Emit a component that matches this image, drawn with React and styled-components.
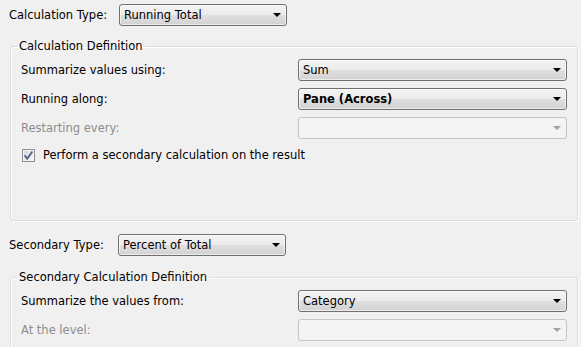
import React from "react";
import styled, { createGlobalStyle } from "styled-components";

const GlobalStyle = createGlobalStyle`
  html, body {
    margin: 0;
    padding: 0;
    background: #f0f0f0;
  }
  body {
    font-family: "DejaVu Sans", Tahoma, sans-serif;
    font-size: 11.5px;
    color: #000;
    width: 581px;
    height: 347px;
    overflow: hidden;
  }
`;

const Page = styled.div`
  display: flex;
  flex-direction: column;
  padding: 4px 3px 0 9px;
`;

const TypeRow = styled.div`
  display: flex;
  align-items: center;
  height: 22px;
  margin-top: ${(p) => p.$top || 0}px;
`;

const TypeLabel = styled.label`
  width: ${(p) => p.$width}px;
  flex: none;
`;

const Group = styled.fieldset`
  margin: 0;
  margin-top: ${(p) => p.$top || 0}px;
  margin-left: 1px;
  padding: 6px 10px ${(p) => p.$bottom || 0}px 10px;
  border: 1px solid #d5dfe5;
  border-radius: 3px;
  box-shadow: inset 1px 1px 0 #fff, 1px 1px 0 #fff;
  min-width: 0;
`;

const Legend = styled.legend`
  margin-left: -4px;
  padding: 0 2px;
  line-height: 14px;
`;

const Rows = styled.div`
  display: grid;
  grid-template-columns: 277px 1fr;
  grid-auto-rows: 22px;
  row-gap: 7px;
  align-items: center;
`;

const RowLabel = styled.label`
  color: ${(p) => (p.$disabled ? "#8d8d8d" : "#000")};
`;

const Combo = styled.div`
  box-sizing: border-box;
  height: 22px;
  width: ${(p) => (p.$width ? `${p.$width}px` : "100%")};
  display: flex;
  align-items: center;
  justify-content: space-between;
  padding: 0 5px 0 4px;
  border: 1px solid ${(p) => (p.$disabled ? "#c3c6c8" : "#707070")};
  border-radius: 3px;
  background: ${(p) =>
    p.$disabled
      ? "#f4f4f4"
      : "linear-gradient(#f3f3f3 0%, #ececec 48%, #dfdfdf 52%, #d2d2d2 100%)"};
  box-shadow: ${(p) => (p.$disabled ? "none" : "inset 0 0 0 1px rgba(255,255,255,0.6)")};
  font-weight: ${(p) => (p.$bold ? "bold" : "normal")};
  white-space: nowrap;
`;

const Arrow = styled.span`
  width: 0;
  height: 0;
  border-left: 4px solid transparent;
  border-right: 4px solid transparent;
  border-top: 4px solid ${(p) => (p.$disabled ? "#a2a2a2" : "#000")};
  flex: none;
`;

const CheckRow = styled.label`
  display: flex;
  align-items: center;
  gap: 8px;
  height: 16px;
  margin-top: 8px;
  padding-left: 1px;
`;

const Select = ({ value, bold, disabled, width }) => (
  <Combo $bold={bold} $disabled={disabled} $width={width}>
    <span>{value}</span>
    <Arrow $disabled={disabled} />
  </Combo>
);

const CheckBox = () => (
  <svg width="13" height="13" viewBox="0 0 13 13">
    <defs>
      <linearGradient id="cbg" x1="0" y1="0" x2="1" y2="1">
        <stop offset="0" stopColor="#d3d6db" />
        <stop offset="1" stopColor="#f8f8f8" />
      </linearGradient>
    </defs>
    <rect x="0.5" y="0.5" width="12" height="12" fill="#f4f4f4" stroke="#8e8f8f" />
    <rect x="2" y="2" width="9" height="9" fill="url(#cbg)" />
    <path d="M2.6 6.2 L5.2 9.8 L10.4 2.4" fill="none" stroke="#4d6185" strokeWidth="1.8" />
  </svg>
);

export default function App() {
  return (
    <>
      <GlobalStyle />
      <Page>
        <TypeRow>
          <TypeLabel $width={110}>Calculation Type:</TypeLabel>
          <Select value="Running Total" width={168} />
        </TypeRow>

        <Group $top={13} $bottom={57}>
          <Legend>Calculation Definition</Legend>
          <Rows>
            <RowLabel>Summarize values using:</RowLabel>
            <Select value="Sum" />
            <RowLabel>Running along:</RowLabel>
            <Select value="Pane (Across)" bold />
            <RowLabel $disabled>Restarting every:</RowLabel>
            <Select value="" disabled />
          </Rows>
          <CheckRow>
            <CheckBox />
            <span>Perform a secondary calculation on the result</span>
          </CheckRow>
        </Group>

        <TypeRow $top={13}>
          <TypeLabel $width={109}>Secondary Type:</TypeLabel>
          <Select value="Percent of Total" width={168} />
        </TypeRow>

        <Group $top={14} $bottom={20}>
          <Legend>Secondary Calculation Definition</Legend>
          <Rows>
            <RowLabel>Summarize the values from:</RowLabel>
            <Select value="Category" />
            <RowLabel $disabled>At the level:</RowLabel>
            <Select value="" disabled />
          </Rows>
        </Group>
      </Page>
    </>
  );
}
